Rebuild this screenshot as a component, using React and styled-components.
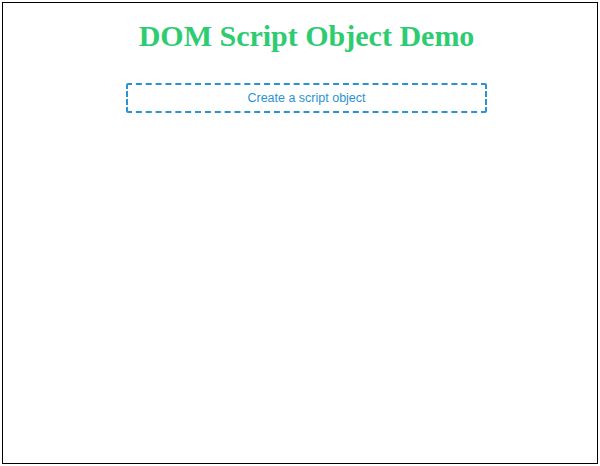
import React from "react";
import styled, { createGlobalStyle } from "styled-components";

const GlobalStyle = createGlobalStyle`
  html, body {
    margin: 0;
    padding: 0;
    background: #fff;
  }
`;

const Frame = styled.div`
  box-sizing: border-box;
  margin: 2px;
  width: 596px;
  height: 462px;
  border: 1px solid #000;
  padding: 0 0 0 13px;
  display: flex;
  flex-direction: column;
  align-items: center;
`;

const Title = styled.h1`
  margin: 16px 0 0;
  font-family: "Liberation Serif", "Times New Roman", serif;
  font-weight: bold;
  font-size: 30px;
  line-height: 34px;
  color: #2ecc71;
`;

const ScriptButton = styled.button`
  box-sizing: border-box;
  margin-top: 30px;
  width: 361px;
  height: 30px;
  background: #fff;
  border: 2px dashed #2a93d5;
  border-radius: 2px;
  color: #2a93d5;
  font-family: "Liberation Sans", Arial, sans-serif;
  font-size: 12.5px;
  cursor: pointer;
`;

export default function App() {
  return (
    <>
      <GlobalStyle />
      <Frame>
        <Title>DOM Script Object Demo</Title>
        <ScriptButton>Create a script object</ScriptButton>
      </Frame>
    </>
  );
}
